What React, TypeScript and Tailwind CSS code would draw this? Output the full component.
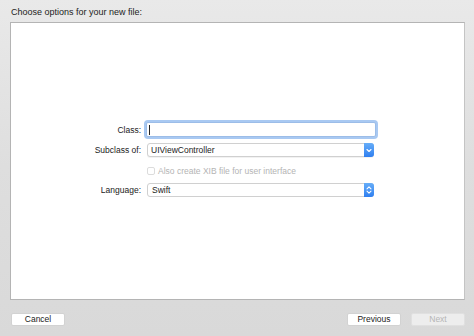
import React from "react";

function ChevDown() {
  return (
    <svg width="6" height="5" viewBox="0 0 6 5" fill="none">
      <path d="M1 1.5 L3 3.5 L5 1.5" stroke="white" strokeWidth="1.1" strokeLinecap="round" strokeLinejoin="round" />
    </svg>
  );
}

function ChevUpDown() {
  return (
    <svg width="6" height="10" viewBox="0 0 6 10" fill="none">
      <path d="M1 3.8 L3 1.8 L5 3.8" stroke="white" strokeWidth="1.1" strokeLinecap="round" strokeLinejoin="round" />
      <path d="M1 6.2 L3 8.2 L5 6.2" stroke="white" strokeWidth="1.1" strokeLinecap="round" strokeLinejoin="round" />
    </svg>
  );
}

export default function App() {
  return (
    <div
      className="w-[474px] h-[336px] flex flex-col bg-gradient-to-b from-[#e9e9e9] via-[#dedede] to-[#d9d9d9] text-[#222]"
      style={{ fontFamily: '"Liberation Sans", Arial, sans-serif' }}
    >
      <div className="h-[22px] pl-[11px] pt-[7px] text-[9px] leading-[11px] text-[#222]">
        Choose options for your new file:
      </div>
      <div className="mx-[10px] mr-[9px] h-[278px] bg-white border border-[#b4b4b4] border-r-[#c4c4c4] flex flex-col pt-[99px] pl-[75px]">
        <div className="grid grid-cols-[55px_230px] gap-x-[5px] text-[8.5px] leading-[10px] whitespace-nowrap">
          {/* Class */}
          <div className="text-right self-center">Class:</div>
          <div className="h-[15px] rounded-[2px] border border-[#9cbde8] ring-2 ring-[#a9c9f2] bg-white flex items-center pl-[2px]">
            <div className="w-[1px] h-[10px] bg-[#222]" />
          </div>
          {/* Subclass */}
          <div className="text-right self-center mt-[6px]">Subclass of:</div>
          <div className="mt-[6px] h-[14px] w-[227px] ml-[1px] rounded-[3px] border border-[#d0d0d0] bg-white flex items-center shadow-[0_1px_0_rgba(0,0,0,0.05)]">
            <span className="pl-[3px] flex-1">UIViewController</span>
            <div className="w-[10px] h-[14px] -mr-[1px] rounded-r-[3px] bg-gradient-to-b from-[#66adf8] to-[#2f7ff0] flex items-center justify-center">
              <ChevDown />
            </div>
          </div>
          {/* Checkbox */}
          <div />
          <div className="mt-[9px] ml-[1px] flex items-center gap-[3px] text-[#b4b4b4]">
            <div className="w-[8px] h-[8px] rounded-[2px] border border-[#dcdcdc] bg-white" />
            <span>Also create XIB file for user interface</span>
          </div>
          {/* Language */}
          <div className="text-right self-center mt-[7px]">Language:</div>
          <div className="mt-[7px] h-[14px] w-[227px] ml-[1px] rounded-[3px] border border-[#d0d0d0] bg-white flex items-center">
            <span className="pl-[4px] flex-1">Swift</span>
            <div className="w-[10px] h-[14px] -mr-[1px] rounded-r-[3px] bg-gradient-to-b from-[#66adf8] to-[#2f7ff0] flex items-center justify-center">
              <ChevUpDown />
            </div>
          </div>
        </div>
      </div>
      <div className="flex items-start pt-[13px] pl-[11px] pr-[9px] text-[8.5px] leading-[11px]">
        <button className="w-[54px] h-[13px] rounded-[2px] bg-white border border-[#d2d2d2] text-[#222] text-center">
          Cancel
        </button>
        <div className="flex-1" />
        <button className="w-[54px] h-[13px] rounded-[2px] bg-white border border-[#d2d2d2] text-[#222] text-center">
          Previous
        </button>
        <button className="ml-[10px] w-[54px] h-[13px] rounded-[2px] bg-[#ededed] border border-[#e0e0e0] text-[#b6b6b6] text-center">
          Next
        </button>
      </div>
    </div>
  );
}
